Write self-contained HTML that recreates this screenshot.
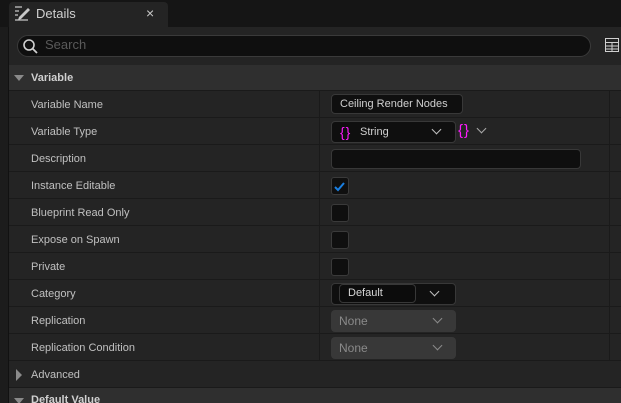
<!DOCTYPE html>
<html><head><style>
*{margin:0;padding:0;box-sizing:border-box}
html,body{width:621px;height:403px;overflow:hidden}
body{background:#151515;font-family:"Liberation Sans",sans-serif;font-size:11px;color:#c0c0c0;position:relative}
.a{position:absolute}
.row{position:absolute;left:9px;width:612px;height:27px;background:#242424;border-bottom:1px solid #1a1a1a}
.row .l{position:absolute;left:22px;top:8px}
.vd{position:absolute;left:310px;top:0;width:1px;height:27px;background:#1a1a1a}
.vd2{position:absolute;left:600px;top:0;width:1px;height:27px;background:#1a1a1a}
.box{position:absolute;background:#0f0f0f;border:1px solid #383838;border-radius:4px}
.cb{position:absolute;left:322px;top:5px;width:18px;height:18px;background:#0f0f0f;border:1px solid #3a3a3a;border-radius:3px}
.chev{position:absolute;width:7px;height:7px;border-right:1.5px solid #c0c0c0;border-bottom:1.5px solid #c0c0c0;transform:rotate(45deg)}
.br{color:#ff1aff;font-size:14px;letter-spacing:1px}
</style></head><body>
<div class="a" style="left:0;top:27px;width:9px;height:376px;background:#1c1c1c;border-right:1px solid #111"></div>
<div class="a" style="left:9px;top:2px;width:159px;height:26px;background:#242424;border-radius:4px 4px 0 0"></div>
<svg class="a" style="left:13px;top:5px" width="18" height="18" viewBox="0 0 18 18"><path d="M2 2h7M2 6h4M2 10h3M2 15h13" stroke="#c8c8c8" stroke-width="1.2"/><path d="M6 12l9-9 2 2-9 9-3 1z" fill="#c8c8c8"/></svg>
<div class="a" style="left:36px;top:6px;font-size:13px;color:#d0d0d0">Details</div>
<div class="a" style="left:146px;top:5px;font-size:14px;color:#c8c8c8">×</div>
<div class="a" style="left:9px;top:27px;width:612px;height:38px;background:#242424"></div>
<div class="a" style="left:17px;top:35px;width:574px;height:22px;background:#0f0f0f;border:1px solid #3a3a3a;border-radius:11px"></div>
<svg class="a" style="left:22px;top:38px" width="16" height="16"><circle cx="7" cy="7" r="5" fill="none" stroke="#d0d0d0" stroke-width="1.6"/><path d="M11 11l4 4" stroke="#d0d0d0" stroke-width="1.8"/></svg>
<div class="a" style="left:45px;top:37px;font-size:13px;color:#5a5a5a">Search</div>
<svg class="a" style="left:605px;top:38px" width="14" height="14"><rect x="0.5" y="0.5" width="13" height="13" fill="none" stroke="#d0d0d0"/><path d="M0 4.5h14M0 8h14M0 11h14M7 4v10" stroke="#d0d0d0"/></svg>
<div class="a" style="left:9px;top:65px;width:612px;height:26px;background:#2f2f2f;border-bottom:1px solid #1a1a1a"></div>
<div class="a" style="left:14px;top:75px;width:0;height:0;border-left:5px solid transparent;border-right:5px solid transparent;border-top:6px solid #8a8a8a"></div>
<div class="a" style="left:31px;top:72px;font-weight:bold;color:#d0d0d0">Variable</div>

<div class="row" style="top:91px"><span class="l">Variable Name</span><div class="vd"></div><div class="vd2"></div>
<div class="box" style="left:322px;top:3px;width:132px;height:20px"><span class="a" style="left:8px;top:3px;color:#d0d0d0">Ceiling Render Nodes</span></div></div>
<div class="row" style="top:118px"><span class="l">Variable Type</span><div class="vd"></div><div class="vd2"></div>
<div class="box" style="left:322px;top:3px;width:125px;height:22px"><span class="a br" style="left:8px;top:2px">{}</span><span class="a" style="left:28px;top:4px;color:#d0d0d0">String</span><div class="chev" style="left:101px;top:4px"></div></div>
<span class="a br" style="left:449px;top:4px;font-size:15px">{}</span><div class="chev" style="left:469px;top:7px;border-color:#aaa"></div></div>
<div class="row" style="top:145px"><span class="l">Description</span><div class="vd"></div><div class="vd2"></div>
<div class="box" style="left:322px;top:4px;width:250px;height:20px"></div></div>
<div class="row" style="top:172px"><span class="l">Instance Editable</span><div class="vd"></div><div class="vd2"></div>
<div class="cb"><svg width="16" height="16" class="a" style="left:0;top:0"><path d="M3 9l3 3 6-7" fill="none" stroke="#1a7fe0" stroke-width="2"/></svg></div></div>
<div class="row" style="top:199px"><span class="l">Blueprint Read Only</span><div class="vd"></div><div class="vd2"></div><div class="cb"></div></div>
<div class="row" style="top:226px"><span class="l">Expose on Spawn</span><div class="vd"></div><div class="vd2"></div><div class="cb"></div></div>
<div class="row" style="top:253px"><span class="l">Private</span><div class="vd"></div><div class="vd2"></div><div class="cb"></div></div>
<div class="row" style="top:280px"><span class="l">Category</span><div class="vd"></div><div class="vd2"></div>
<div class="box" style="left:322px;top:3px;width:125px;height:22px"></div>
<div class="box" style="left:330px;top:4px;width:77px;height:19px;background:#0c0c0c"><span class="a" style="left:8px;top:2px;color:#d8d8d8">Default</span></div>
<div class="chev" style="left:422px;top:8px"></div></div>
<div class="row" style="top:307px"><span class="l">Replication</span><div class="vd"></div><div class="vd2"></div>
<div class="a" style="left:322px;top:3px;width:125px;height:22px;background:#383838;border-radius:4px"><span class="a" style="left:8px;top:4px;color:#8a8a8a;font-size:12px">None</span><div class="chev" style="left:103px;top:5px;border-color:#8a8a8a"></div></div></div>
<div class="row" style="top:334px"><span class="l">Replication Condition</span><div class="vd"></div><div class="vd2"></div>
<div class="a" style="left:322px;top:3px;width:125px;height:22px;background:#383838;border-radius:4px"><span class="a" style="left:8px;top:4px;color:#8a8a8a;font-size:12px">None</span><div class="chev" style="left:103px;top:5px;border-color:#8a8a8a"></div></div></div>
<div class="row" style="top:361px"><span class="l">Advanced</span>
<div class="a" style="left:7px;top:8px;width:0;height:0;border-top:6px solid transparent;border-bottom:6px solid transparent;border-left:6px solid #8a8a8a"></div></div>
<div class="a" style="left:9px;top:388px;width:612px;height:15px;background:#2f2f2f"></div>
<div class="a" style="left:14px;top:398px;width:0;height:0;border-left:5px solid transparent;border-right:5px solid transparent;border-top:6px solid #8a8a8a"></div>
<div class="a" style="left:31px;top:394px;font-weight:bold;color:#d0d0d0">Default Value</div>
</body></html>
